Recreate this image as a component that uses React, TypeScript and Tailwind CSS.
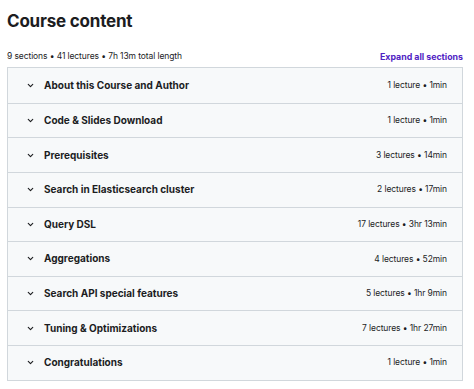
import React from 'react'

const sections = [
  { title: 'About this Course and Author', meta: '1 lecture • 1min' },
  { title: 'Code & Slides Download', meta: '1 lecture • 1min' },
  { title: 'Prerequisites', meta: '3 lectures • 14min' },
  { title: 'Search in Elasticsearch cluster', meta: '2 lectures • 17min' },
  { title: 'Query DSL', meta: '17 lectures • 3hr 13min' },
  { title: 'Aggregations', meta: '4 lectures • 52min' },
  { title: 'Search API special features', meta: '5 lectures • 1hr 9min' },
  { title: 'Tuning & Optimizations', meta: '7 lectures • 1hr 27min' },
  { title: 'Congratulations', meta: '1 lecture • 1min' },
]

export default function App() {
  return (
    <main className="w-[474px] h-[389px] bg-white px-[7px] pt-[9px] text-[#1c1d1f] font-['Inter','Liberation_Sans',sans-serif]">
      <h1 className="text-[17px] leading-[24px] font-bold tracking-[-0.2px]">Course content</h1>

      <div className="flex items-center justify-between mt-[17px] pr-[4px]">
        <span className="text-[8.5px] tracking-[-0.1px]">9 sections • 41 lectures • 7h 13m total length</span>
        <span className="text-[8.8px] font-bold text-[#5022c3]">Expand all sections</span>
      </div>

      {/* Sections list */}
      <div className="mt-[4px] w-[456px] border border-[#d1d7dc]">
        {sections.map((s, i) => (
          <div
            key={s.title}
            className={`flex items-center h-[34.6px] bg-[#f7f9fa] pl-[18px] pr-[15px] ${i > 0 ? 'border-t border-[#d1d7dc]' : ''}`}
          >
            <svg width="9" height="9" viewBox="0 0 24 24" fill="none" stroke="#1c1d1f" strokeWidth="3" strokeLinecap="round" strokeLinejoin="round" className="mr-[9px]">
              <path d="M6 9l6 6 6-6" />
            </svg>
            <span className="text-[10px] font-bold">{s.title}</span>
            <span className="ml-auto text-[8.5px] tracking-[-0.1px]">{s.meta}</span>
          </div>
        ))}
      </div>
    </main>
  )
}
